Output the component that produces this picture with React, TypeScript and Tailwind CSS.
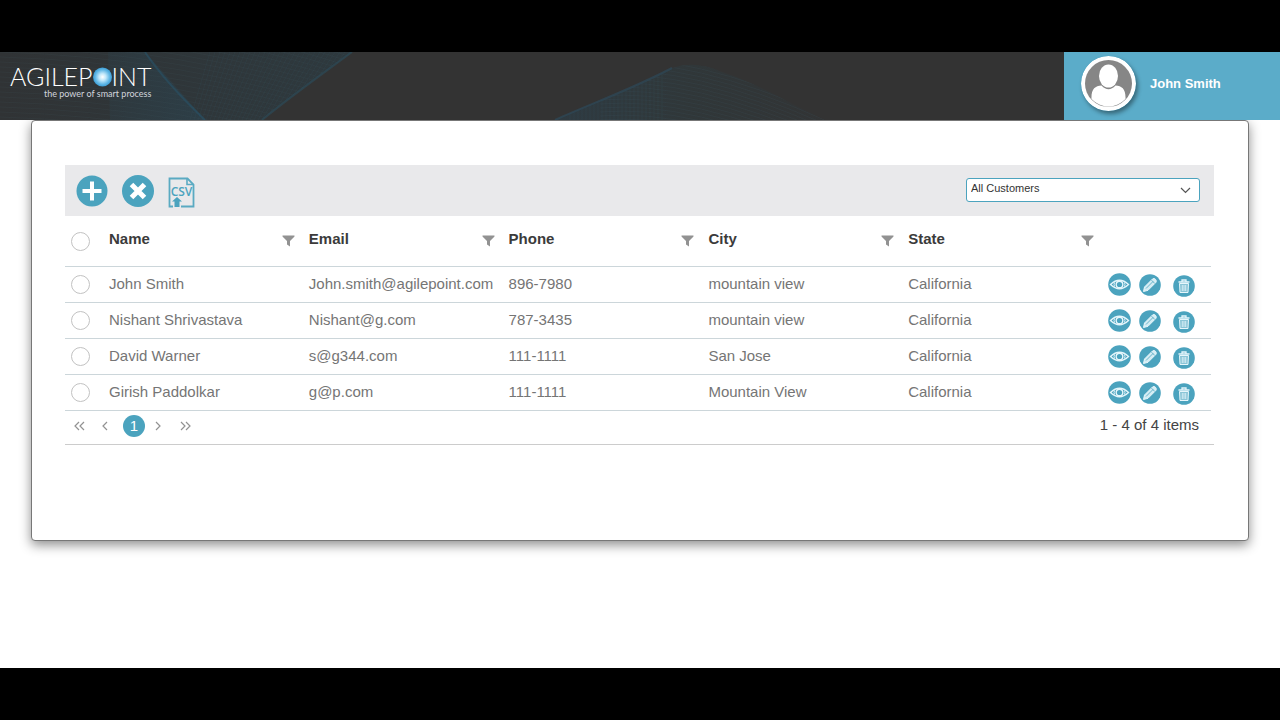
import { useState } from "react";

type Customer = {
  name: string;
  email: string;
  phone: string;
  city: string;
  state: string;
};

const customers: Customer[] = [
  { name: "John Smith", email: "John.smith@agilepoint.com", phone: "896-7980", city: "mountain view", state: "California" },
  { name: "Nishant Shrivastava", email: "Nishant@g.com", phone: "787-3435", city: "mountain view", state: "California" },
  { name: "David Warner", email: "s@g344.com", phone: "111-1111", city: "San Jose", state: "California" },
  { name: "Girish Paddolkar", email: "g@p.com", phone: "111-1111", city: "Mountain View", state: "California" },
];

const columns: { key: keyof Customer; label: string }[] = [
  { key: "name", label: "Name" },
  { key: "email", label: "Email" },
  { key: "phone", label: "Phone" },
  { key: "city", label: "City" },
  { key: "state", label: "State" },
];

const HeaderMesh = () => (
  <svg className="absolute left-0 top-0" width="1064" height="68" viewBox="0 0 1064 68" fill="none" aria-hidden="true">
    <defs>
      <linearGradient id="meshLeft" x1="0" x2="352" y1="0" y2="0" gradientUnits="userSpaceOnUse">
        <stop offset="0" stopColor="#303335" />
        <stop offset="0.4" stopColor="#2f3538" />
        <stop offset="1" stopColor="#2e393e" />
      </linearGradient>
      <linearGradient id="meshRight" x1="555" x2="825" y1="0" y2="0" gradientUnits="userSpaceOnUse">
        <stop offset="0" stopColor="#2e3a41" />
        <stop offset="0.5" stopColor="#303739" />
        <stop offset="1" stopColor="#323435" />
      </linearGradient>
      <linearGradient id="beam" x1="100" x2="205" y1="0" y2="0" gradientUnits="userSpaceOnUse">
        <stop offset="0" stopColor="#2b4654" stopOpacity="0.2" />
        <stop offset="1" stopColor="#2b4654" stopOpacity="0.5" />
      </linearGradient>
      <clipPath id="clipLeft">
        <path d="M0 0H352C325 20 290 45 262 68H0Z" />
      </clipPath>
      <clipPath id="clipRight">
        <path d="M555 68C590 52 630 38 672 16Q695 8 722 20C760 32 790 52 825 68Z" />
      </clipPath>
    </defs>
    <g clipPath="url(#clipLeft)">
      <rect width="352" height="68" fill="url(#meshLeft)" />
      <path d="M108 0H145L205 68H110Z" fill="url(#beam)" />
      {Array.from({ length: 34 }, (_, i) => (
        <path key={i} d={`M0 ${i * 5 - 70}Q180 ${i * 5 - 65} 352 ${i * 5 - 10}`} stroke="#486169" strokeOpacity="0.12" />
      ))}
      {Array.from({ length: 30 }, (_, i) => (
        <path key={i} d={`M${210 + i * 5} 0L${190 + i * 4} 68`} stroke="#3d6470" strokeOpacity="0.12" />
      ))}
    </g>
    <path d="M145 0Q165 30 205 68" stroke="#25566d" strokeOpacity="0.5" strokeWidth="2" />
    <path d="M352 0C325 20 290 45 262 68" stroke="#2c4c5c" strokeOpacity="0.6" strokeWidth="2" />
    <g clipPath="url(#clipRight)">
      <rect x="555" width="270" height="68" fill="url(#meshRight)" />
      {Array.from({ length: 20 }, (_, i) => (
        <path key={i} d={`M600 ${i * 4}Q690 ${i * 4 - 8} 825 ${i * 4 + 52}`} stroke="#456069" strokeOpacity="0.15" />
      ))}
      {Array.from({ length: 24 }, (_, i) => (
        <path key={i} d={`M${570 + i * 4} 0V68`} stroke="#3d6470" strokeOpacity="0.14" />
      ))}
    </g>
    <path d="M555 68C590 52 630 38 672 16" stroke="#2e4958" strokeOpacity="0.7" strokeWidth="2" />
  </svg>
);

const Logo = () => (
  <a href="#" className="relative flex flex-col pl-[10px] pt-[12px] font-['Lato','Liberation_Sans',sans-serif] text-white">
    <span className="flex items-center text-[25px] font-light leading-[25px]">
      AGILEP
      <svg width="19" height="20" viewBox="0 0 20 20" aria-label="O">
        <defs>
          <radialGradient id="orb">
            <stop offset="0" stopColor="#ffffff" />
            <stop offset="0.35" stopColor="#c3e8fa" />
            <stop offset="0.75" stopColor="#62b8e6" />
            <stop offset="1" stopColor="#3c9dd4" />
          </radialGradient>
        </defs>
        <circle cx="10" cy="10" r="10" fill="url(#orb)" />
      </svg>
      INT
    </span>
    <span className="text-right text-[9px] leading-[10px] text-gray-300">the power of smart process</span>
  </a>
);

const Avatar = () => (
  <svg className="rounded-full shadow-[2px_3px_4px_rgba(0,0,0,0.4)]" width="55" height="55" viewBox="0 0 55 55" aria-hidden="true">
    <circle cx="27.500" cy="27.500" r="27.500" fill="#fff" />
    <circle cx="27.500" cy="27.500" r="23.500" fill="#868686" />
    <path d="M10.500 43C10 33 14 30 20.500 29.500Q27.500 37 34.500 29.500C41 30 45 33 44.500 43A23.500 23.500 0 0 1 10.500 43Z" fill="#fff" />
    <ellipse cx="27.500" cy="20" rx="9.500" ry="11.500" fill="#fff" />
    <path d="M22 50.500H33" stroke="#ddd" />
  </svg>
);

const FilterIcon = () => (
  <svg width="13" height="12" viewBox="0 0 13 12" fill="#929292" aria-hidden="true">
    <path d="M0.500 0.500H12.500V1.500L8 6V11.500L5 9.500V6L0.500 1.500Z" />
  </svg>
);

const AddIcon = () => (
  <svg width="32" height="32" viewBox="0 0 32 32" aria-hidden="true">
    <circle cx="16" cy="16" r="15.500" fill="#4ba3be" />
    <path d="M16 6.500V25.500M6.500 16H25.500" stroke="#fff" strokeWidth="4" />
  </svg>
);

const RemoveIcon = () => (
  <svg width="32" height="32" viewBox="0 0 32 32" aria-hidden="true">
    <circle cx="16" cy="16" r="16" fill="#4ba3be" />
    <path d="M9.500 9.500L22.500 22.500M22.500 9.500L9.500 22.500" stroke="#fff" strokeWidth="5" />
  </svg>
);

const CsvIcon = () => (
  <svg width="27" height="31" viewBox="0 0 27 31" fill="none" aria-hidden="true">
    <path d="M5 29.500H1.500V1.500H19.500L25.500 7.500V29.500H13" stroke="#5aaac2" strokeWidth="1.800" />
    <path d="M19 1.500V7.500H25.500" stroke="#5aaac2" strokeWidth="1.600" />
    <path d="M9 20L14 24.500H11.500V30H6.500V24.500H4Z" fill="#4ba3be" />
    <text x="13.500" y="18.500" textAnchor="middle" fill="#4ba3be" fontSize="12" fontWeight="600" fontFamily="'Open Sans', sans-serif">
      CSV
    </text>
  </svg>
);

const EyeIcon = () => (
  <svg width="23" height="23" viewBox="0 0 23 23" fill="none" aria-hidden="true">
    <circle cx="11.500" cy="11.500" r="11.300" fill="#4ba3be" />
    <path d="M2.500 11.500Q11.500 3 20.500 11.500Q11.500 20 2.500 11.500Z" stroke="#e6f6fb" strokeWidth="1.400" />
    <circle cx="11.500" cy="11.500" r="3.300" stroke="#e6f6fb" strokeWidth="1.400" />
    <path d="M6.500 9.500Q5.500 11.500 6.500 13.500M16.500 9.500Q17.500 11.500 16.500 13.500" stroke="#e6f6fb" />
  </svg>
);

const PencilIcon = () => (
  <svg width="22" height="22" viewBox="0 0 22 22" fill="none" aria-hidden="true">
    <circle cx="11" cy="11" r="10.800" fill="#4ba3be" />
    <path d="M4.500 17.500L5.500 13L13.500 5Q15 3.800 16.500 5.300Q18 7 16.800 8.500L9 16.300Z" fill="#d5edf4" stroke="#e6f6fb" />
    <path d="M7 14.500L14 7.500M12.500 6.200L15.800 9.500" stroke="#4ba3be" strokeWidth="0.800" />
  </svg>
);

const TrashIcon = () => (
  <svg width="22" height="22" viewBox="0 0 22 22" fill="none" aria-hidden="true">
    <circle cx="11" cy="11" r="10.800" fill="#4ba3be" />
    <path d="M5.500 7H16.500M9 6.500V5H13V6.500" stroke="#e6f6fb" strokeWidth="1.300" />
    <path d="M6.500 8.500H15.500L15 17.500H7Z" fill="#8ac5d7" stroke="#e6f6fb" />
    <path d="M9.300 10V16M11 10V16M12.700 10V16" stroke="#e6f6fb" strokeWidth="0.800" />
  </svg>
);

const PagerArrow = ({ label, d }: { label: string; d: string }) => (
  <button type="button" aria-label={label} className="flex w-3 justify-center">
    <svg width="12" height="10" viewBox="0 0 12 10" fill="none" stroke="#929292" strokeWidth="1.200" aria-hidden="true">
      <path d={d} />
    </svg>
  </button>
);

const checkboxStyle =
  "block size-[19px] appearance-none rounded-full border border-[#c2c2c2] bg-white checked:bg-[#4ba3be]";

const CustomerTable = () => {
  const [selected, setSelected] = useState<string[]>([]);
  const allSelected = selected.length === customers.length;

  const toggle = (name: string) =>
    setSelected((prev) => (prev.includes(name) ? prev.filter((n) => n !== name) : [...prev, name]));

  return (
    <div className="pr-[3px]">
      <table className="w-full table-fixed border-separate border-spacing-0 text-[15px] leading-5">
        <thead>
          <tr className="h-[51px] text-left text-[#3b3b3b]">
            <th className="w-11 border-b border-[#ccd6da] pl-[6px]">
              <input
                type="checkbox"
                aria-label="Select all"
                className={checkboxStyle}
                checked={allSelected}
                onChange={() => setSelected(allSelected ? [] : customers.map((c) => c.name))}
              />
            </th>
            {columns.map((column) => (
              <th key={column.key} className="border-b border-[#ccd6da] pb-1 pr-[14px] font-bold">
                <div className="flex items-center justify-between">
                  {column.label}
                  <button type="button" aria-label={`Filter ${column.label}`} className="pt-1">
                    <FilterIcon />
                  </button>
                </div>
              </th>
            ))}
            <td className="w-[103px] border-b border-[#ccd6da]" />
          </tr>
        </thead>
        <tbody>
          {customers.map((customer) => (
            <tr key={customer.name} className="h-9 text-[#757575]">
              <td className="border-b border-[#ccd6da] pl-[6px]">
                <input
                  type="checkbox"
                  aria-label={`Select ${customer.name}`}
                  className={checkboxStyle}
                  checked={selected.includes(customer.name)}
                  onChange={() => toggle(customer.name)}
                />
              </td>
              {columns.map((column) => (
                <td key={column.key} className="whitespace-nowrap border-b border-[#ccd6da] pb-[2px]">
                  {customer[column.key]}
                </td>
              ))}
              <td className="border-b border-[#ccd6da]">
                <div className="flex items-center gap-2">
                  <button type="button" aria-label="View">
                    <EyeIcon />
                  </button>
                  <button type="button" aria-label="Edit">
                    <PencilIcon />
                  </button>
                  <button type="button" aria-label="Delete" className="pl-1 pt-[2px]">
                    <TrashIcon />
                  </button>
                </div>
              </td>
            </tr>
          ))}
        </tbody>
      </table>
    </div>
  );
};

const App = () => {
  return (
    <div className="flex min-h-screen flex-col bg-black py-[52px] font-['Liberation_Sans',Arial,sans-serif]">
      <header className="relative flex h-[68px] justify-between bg-[#333333]">
        <HeaderMesh />
        <Logo />
        <div className="relative flex w-[216px] items-center gap-[14px] bg-[#5bacc9] pb-[6px] pl-[17px]">
          <Avatar />
          <span className="pt-[2px] text-[13px] font-bold text-white">John Smith</span>
        </div>
      </header>

      <main className="flex-1 bg-white px-[31px]">
        <section className="rounded border border-[#777777] bg-white pb-[95px] pl-[33px] pr-[34px] pt-11 shadow-[0_4px_12px_rgba(0,0,0,0.45)]">
          <div className="flex h-[51px] items-center justify-between bg-[#e9e9eb] pl-[11px] pr-[14px]">
            <div className="flex items-center gap-[14px]">
              <button type="button" aria-label="Add customer">
                <AddIcon />
              </button>
              <button type="button" aria-label="Remove customers">
                <RemoveIcon />
              </button>
              <button type="button" aria-label="Export CSV" className="pt-1">
                <CsvIcon />
              </button>
            </div>
            <div className="relative pb-[2px]">
              <select
                aria-label="Customer view"
                className="block h-6 w-[234px] appearance-none rounded-[3px] border border-[#4ba3be] bg-white pb-[2px] pl-1 text-[11px] text-[#333333]"
              >
                <option>All Customers</option>
              </select>
              <svg
                className="pointer-events-none absolute right-[9px] top-[9px]"
                width="11"
                height="7"
                viewBox="0 0 11 7"
                fill="none"
                stroke="#555555"
                strokeWidth="1.200"
                aria-hidden="true"
              >
                <path d="M1 1L5.500 5.500L10 1" />
              </svg>
            </div>
          </div>

          <CustomerTable />

          <nav aria-label="Pagination" className="flex h-[34px] items-center justify-between border-b border-[#cccccc] pb-1 pl-2 pr-[15px]">
            <div className="flex items-center">
              <div className="flex gap-[14px] pr-3">
                <PagerArrow label="First page" d="M6 1L2 5L6 9M11 1L7 5L11 9" />
                <PagerArrow label="Previous page" d="M8 1L4 5L8 9" />
              </div>
              <button type="button" aria-current="page" className="size-[22px] rounded-full bg-[#4ba3be] text-[15px] leading-[22px] text-white">
                1
              </button>
              <div className="flex gap-4 pl-[7px]">
                <PagerArrow label="Next page" d="M4 1L8 5L4 9" />
                <PagerArrow label="Last page" d="M1 1L5 5L1 9M6 1L10 5L6 9" />
              </div>
            </div>
            <span className="text-[15px] text-[#444444]">1 - 4 of 4 items</span>
          </nav>
        </section>
      </main>
    </div>
  );
};

export default App;
